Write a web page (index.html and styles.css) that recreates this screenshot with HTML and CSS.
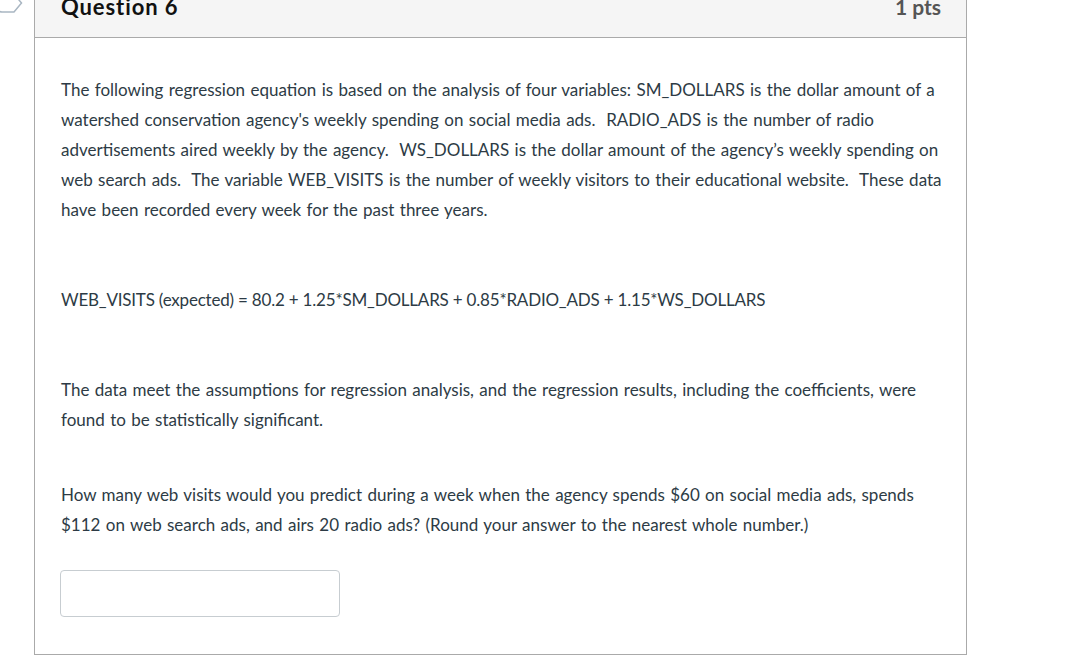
FILE: index.html
```html
<!DOCTYPE html>
<html>
<head>
<meta charset="utf-8">
<link rel="stylesheet" href="styles.css">
</head>
<body>
<div class="page">
  <svg class="flag" width="24" height="16" viewBox="0 0 24 16"><path d="M-2 -6 H14 L21.5 3 L14 12 H2 Q-2 12 -2 8 Z" fill="#fff" stroke="#a9b6c2" stroke-width="1.5"/></svg>
  <div class="card">
    <div class="head">
      <h2 class="title">Question 6</h2>
      <div class="pts">1 pts</div>
    </div>
    <div class="body">
      <p>The following regression equation is based on the analysis of four variables: SM_DOLLARS is the dollar amount of a<br>watershed conservation agency's weekly spending on social media ads.&nbsp; RADIO_ADS is the number of radio<br>advertisements aired weekly by the agency.&nbsp; WS_DOLLARS is the dollar amount of the agency’s weekly spending on<br>web search ads.&nbsp; The variable WEB_VISITS is the number of weekly visitors to their educational website.&nbsp; These data<br>have been recorded every week for the past three years.</p>
      <p class="gap eq">WEB_VISITS (expected) = 80.2 + 1.25*SM_DOLLARS + 0.85*RADIO_ADS + 1.15*WS_DOLLARS</p>
      <p class="gap">The data meet the assumptions for regression analysis, and the regression results, including the coefficients, were<br>found to be statistically significant.</p>
      <p class="gap2">How many web visits would you predict during a week when the agency spends $60 on social media ads, spends<br>$112 on web search ads, and airs 20 radio ads? (Round your answer to the nearest whole number.)</p>
      <div class="answer"><input class="input" type="text"></div>
    </div>
  </div>
</div>
</body>
</html>
```
FILE: styles.css
```css
html, body { margin: 0; padding: 0; background: #fff; }
body { font-family: Lato, "Open Sans", sans-serif; color: #2d3b45; }
.page { position: relative; padding-left: 34px; width: 933px; }
.flag { position: absolute; left: 0; top: 0; }
.card {
  border: 1px solid #aaa;
  border-top: none;
  box-sizing: border-box;
  width: 933px;
  height: 655px;
}
.head {
  height: 37px;
  background: #f5f5f5;
  border-bottom: 1px solid #aaa;
  display: flex;
  justify-content: space-between;
  align-items: flex-start;
  padding: 0 25px 0 26px;
}
.title {
  margin: -6px 0 0 0;
  font-size: 22px;
  line-height: 26px;
  font-weight: 700;
  color: #111;
  letter-spacing: 0.9px;
}
.pts {
  margin-top: -6px;
  font-size: 21px;
  line-height: 26px;
  font-weight: 700;
  color: #555;
}
.body {
  padding: 37px 20px 0 26px;
  font-size: 17px;
  line-height: 30px;
  word-spacing: 1px;
  white-space: nowrap;
}
.body p { margin: 0; }
.body .eq { word-spacing: 0; letter-spacing: -0.2px; }
.body .gap { margin-top: 60px; }
.body .gap2 { margin-top: 45px; }
.answer { margin-top: 30px; }
.input {
  display: block;
  margin-left: -1px;
  width: 280px;
  height: 47px;
  box-sizing: border-box;
  border: 1px solid #c7cdd1;
  border-radius: 4px;
  background: #fff;
}
```
